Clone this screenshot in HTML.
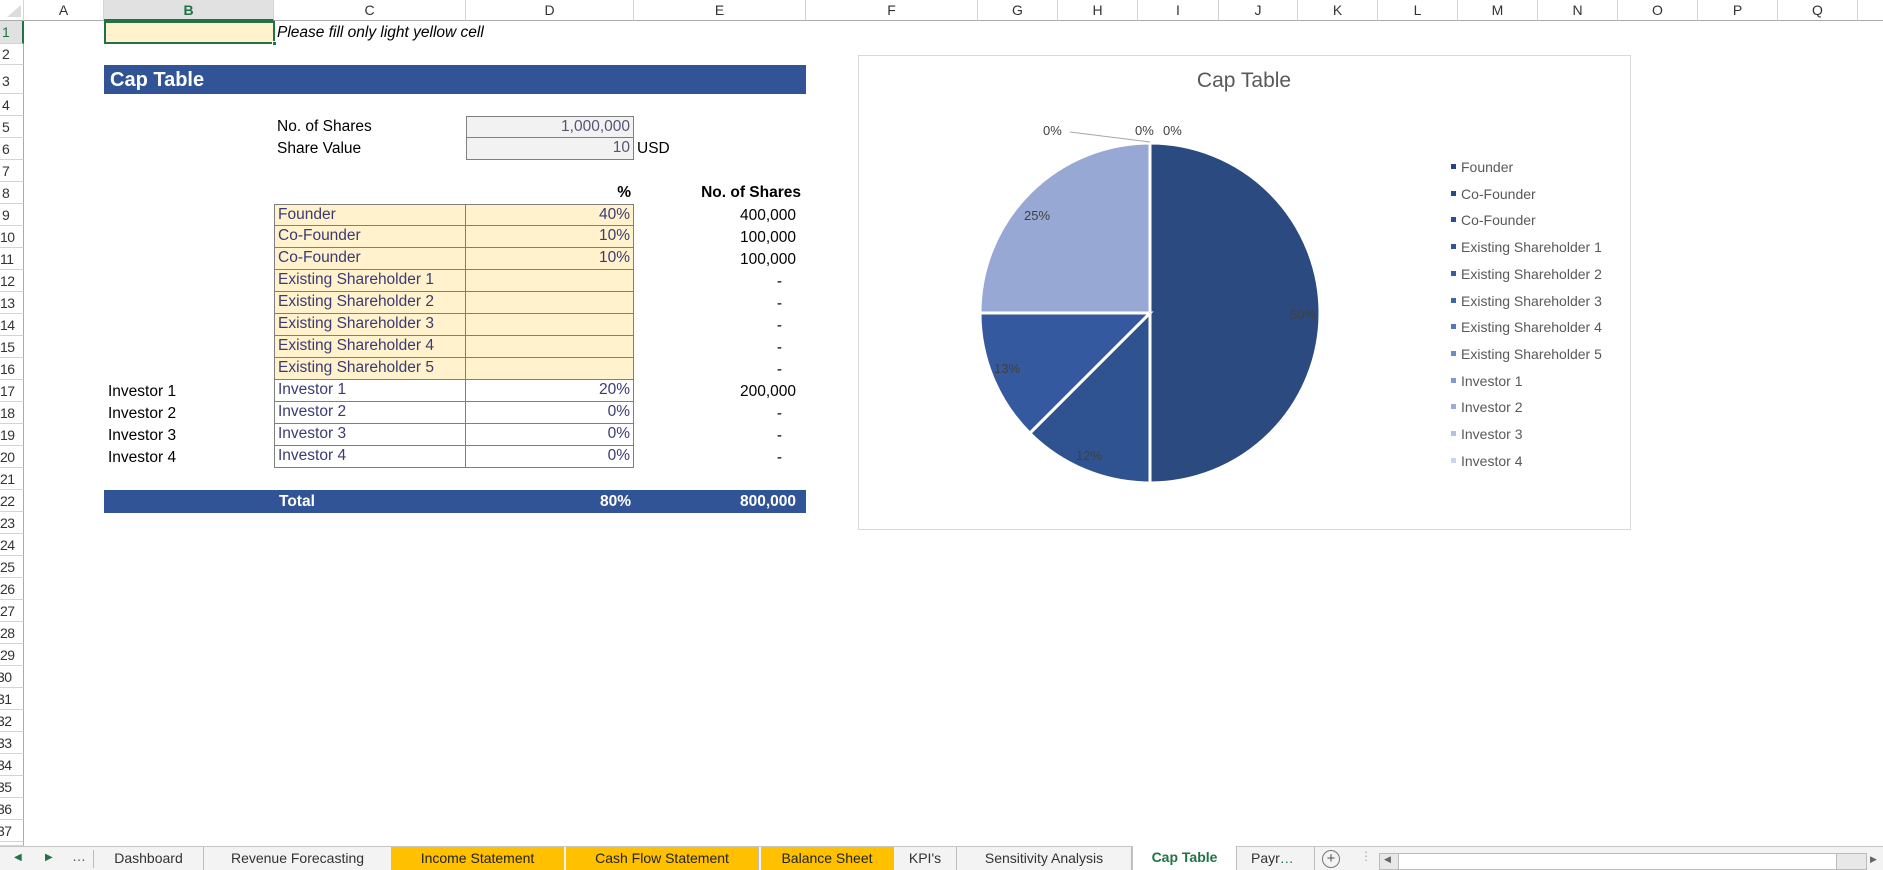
<!DOCTYPE html>
<html><head><meta charset="utf-8"><style>
*{margin:0;padding:0;box-sizing:border-box}
body{width:1883px;height:870px;overflow:hidden;background:#fff;font-family:"Liberation Sans",Arial,sans-serif;position:relative}
.a{position:absolute;white-space:nowrap}
.ch{position:absolute;top:0;height:21px;border-right:1px solid #d4d4d4;border-bottom:1px solid #ababab;text-align:center;font-size:14px;line-height:21px;color:#333}
.rh{position:absolute;left:0;width:24px;border-bottom:1px solid #d4d4d4;border-right:1px solid #ababab;font-size:14px;color:#333;text-align:left;padding-left:2px;overflow:hidden}
.t{font-size:15.5px;line-height:22px}
.cell{position:absolute;height:22px;border:1px solid #7f7f7f;font-size:15.5px;line-height:20px;color:#3b3b73;padding:0 3px}
.tab{position:absolute;top:847px;height:23px;font-size:14px;line-height:22px;color:#333;text-align:center;border-right:1px solid #bcbcbc}
</style></head><body>
<div class="ch" style="left:0;width:24px;background:#fff"></div>
<svg class="a" style="left:4px;top:4px" width="18" height="14"><polygon points="17,1 17,13 3,13" fill="#dcdcdc"/></svg>
<div class="ch" style="left:24px;width:80px">A</div>
<div class="ch" style="left:104px;width:170px;background:#e1e1e1;color:#217346;font-weight:bold;border-bottom:2px solid #217346">B</div>
<div class="ch" style="left:274px;width:192px">C</div>
<div class="ch" style="left:466px;width:168px">D</div>
<div class="ch" style="left:634px;width:172px">E</div>
<div class="ch" style="left:806px;width:172px">F</div>
<div class="ch" style="left:978px;width:80px">G</div>
<div class="ch" style="left:1058px;width:80px">H</div>
<div class="ch" style="left:1138px;width:81px">I</div>
<div class="ch" style="left:1219px;width:79px">J</div>
<div class="ch" style="left:1298px;width:80px">K</div>
<div class="ch" style="left:1378px;width:80px">L</div>
<div class="ch" style="left:1458px;width:80px">M</div>
<div class="ch" style="left:1538px;width:80px">N</div>
<div class="ch" style="left:1618px;width:80px">O</div>
<div class="ch" style="left:1698px;width:80px">P</div>
<div class="ch" style="left:1778px;width:80px">Q</div>
<div class="ch" style="left:1858px;width:25px;border-right:none"></div>
<div class="rh" style="top:21px;height:23px;line-height:23px;background:#e1e1e1;color:#217346;border-right:2px solid #217346">1</div>
<div class="rh" style="top:44px;height:21px;line-height:21px">2</div>
<div class="rh" style="top:65px;height:29px;line-height:32px">3</div>
<div id="rows"></div>
<script>
var h='';var y=94;for(var r=4;r<=37;r++){h+='<div class="rh" style="top:'+y+'px;height:22px;line-height:22px;'+(r>=10?'padding-left:0;text-indent:'+(r>=30?-3:0)+'px;letter-spacing:-0.5px':'')+'">'+r+'</div>';y+=22;}
h+='<div class="rh" style="top:'+y+'px;height:'+(846-y)+'px"></div>';
document.getElementById('rows').outerHTML=h;
</script>
<div class="a" style="left:104px;top:21px;width:171px;height:23px;background:#fff2cc;border:2px solid #217346"></div>
<div class="a" style="left:272px;top:41px;width:5px;height:5px;background:#217346;border:1px solid #fff"></div>
<div class="a t" style="left:277px;top:22px;font-style:italic;color:#000">Please fill only light yellow cell</div>
<div class="a" style="left:104px;top:65px;width:702px;height:29px;background:#305496;color:#fff;font-weight:bold;font-size:20px;line-height:30px;padding-left:6px">Cap Table</div>
<div class="a t" style="left:277px;top:116px">No. of Shares</div>
<div class="a t" style="left:277px;top:138px">Share Value</div>
<div class="cell" style="left:466px;top:116px;width:168px;background:#f2f2f2;text-align:right;color:#555577">1,000,000</div>
<div class="cell" style="left:466px;top:138px;width:168px;background:#f2f2f2;text-align:right;color:#555577;border-top:none;height:22px">10</div>
<div class="a t" style="left:637px;top:138px">USD</div>
<div class="a t" style="left:466px;top:182px;width:165px;text-align:right;font-weight:bold">%</div>
<div class="a t" style="left:634px;top:182px;width:167px;text-align:right;font-weight:bold">No. of Shares</div>
<div id="tbl"></div>
<script>
var rows=[["Founder","40%","400,000",1],["Co-Founder","10%","100,000",1],["Co-Founder","10%","100,000",1],["Existing Shareholder 1","","-",1],["Existing Shareholder 2","","-",1],["Existing Shareholder 3","","-",1],["Existing Shareholder 4","","-",1],["Existing Shareholder 5","","-",1],["Investor 1","20%","200,000",0],["Investor 2","0%","-",0],["Investor 3","0%","-",0],["Investor 4","0%","-",0]];
var s='';rows.forEach(function(r,i){var y=204+i*22;var bg=r[3]?'#fff2cc':'#fff';var bt=i?'border-top:none;height:22px;':'';
s+='<div class="cell" style="left:274px;top:'+y+'px;width:192px;background:'+bg+';'+bt+'">'+r[0]+'</div>';
s+='<div class="cell" style="left:465px;top:'+y+'px;width:169px;background:'+bg+';text-align:right;'+bt+'">'+r[1]+'</div>';
s+='<div class="a t" style="left:634px;top:'+(y+1)+'px;width:'+(r[2]=='-'?148:162)+'px;text-align:right">'+r[2]+'</div>';
if(i>=8)s+='<div class="a t" style="left:108px;top:'+(y+1)+'px">'+r[0]+'</div>';});
document.getElementById('tbl').outerHTML=s;
</script>
<div class="a" style="left:104px;top:490px;width:702px;height:23px;background:#305496;color:#fff;font-weight:bold;font-size:15.5px;line-height:23px">
<span class="a" style="left:175px">Total</span><span class="a" style="left:362px;width:165px;text-align:right">80%</span><span class="a" style="left:530px;width:162px;text-align:right">800,000</span></div>
<div class="a" style="left:858px;top:55px;width:773px;height:475px;border:1px solid #d9d9d9;background:#fff"></div>
<div class="a" style="left:1144px;top:69px;width:200px;text-align:center;font-size:21px;color:#595959">Cap Table</div>
<svg class="a" style="left:858px;top:55px" width="773" height="475">
<g transform="translate(292,258)" stroke="#fff" stroke-width="3">
<path d="M0,0 L0,-170 A170,170 0 0 1 0,170 Z" fill="#2b4a80"/>
<path d="M0,0 L0,170 A170,170 0 0 1 -120.2,120.2 Z" fill="#2f5391"/>
<path d="M0,0 L-120.2,120.2 A170,170 0 0 1 -170,0 Z" fill="#35599f"/>
<path d="M0,0 L-170,0 A170,170 0 0 1 0,-170 Z" fill="#97a8d5"/>
</g>
<polyline points="212,77 292,87" stroke="#a6a6a6" fill="none" stroke-width="1"/>
<g font-family="Liberation Sans,Arial,sans-serif" font-size="13" fill="#404040">
<text x="185" y="80">0%</text><text x="277" y="80">0%</text><text x="305" y="80">0%</text>
<text x="166" y="165">25%</text><text x="432" y="264">50%</text><text x="136" y="318">13%</text><text x="218" y="405">12%</text>
</g>
</svg>
<div id="leg"></div>
<script>
var L=["Founder","Co-Founder","Co-Founder","Existing Shareholder 1","Existing Shareholder 2","Existing Shareholder 3","Existing Shareholder 4","Existing Shareholder 5","Investor 1","Investor 2","Investor 3","Investor 4"];
var C=["#26457d","#2a4a86","#2e4f8f","#325598","#385ca2","#4065ab","#5677bb","#6f8bc6","#8398cc","#9aabd6","#b4c1e1","#cbd4ec"];
var s='';L.forEach(function(t,i){var y=158+i*26.7;s+='<div class="a" style="left:1451px;top:'+(y+6)+'px;width:5px;height:5px;background:'+C[i]+'"></div><div class="a" style="left:1461px;top:'+y+'px;font-size:14px;line-height:18px;color:#595959">'+t+'</div>';});
document.getElementById('leg').outerHTML=s;
</script>
<div class="a" style="left:0;top:846px;width:1883px;height:24px;background:#f3f3f3;border-top:1px solid #c6c6c6"></div>
<div class="a" style="left:14px;top:852px;font-size:10px;color:#217346">◀</div>
<div class="a" style="left:45px;top:852px;font-size:10px;color:#217346">▶</div>
<div class="a" style="left:72px;top:848px;font-size:14px;color:#555">…</div>
<div class="a" style="left:93px;top:850px;height:18px;border-left:1px solid #bcbcbc"></div>
<div class="tab" style="left:94px;width:110px">Dashboard</div>
<div class="tab" style="left:204px;width:188px">Revenue Forecasting</div>
<div class="tab" style="left:392px;width:172px;background:#ffc000;color:#222">Income Statement</div>
<div class="tab" style="left:566px;width:193px;background:#ffc000;color:#222">Cash Flow Statement</div>
<div class="tab" style="left:761px;width:133px;background:#ffc000;color:#222">Balance Sheet</div>
<div class="tab" style="left:894px;width:63px">KPI's</div>
<div class="tab" style="left:957px;width:175px">Sensitivity Analysis</div>
<div class="tab" style="left:1132px;width:105px;background:#fff;color:#217346;font-weight:bold;top:846px;height:24px;border-left:1px solid #c6c6c6">Cap Table</div>
<div class="tab" style="left:1237px;width:78px;text-align:left;padding-left:14px">Payr<span style="color:#217346">…</span></div>
<div class="a" style="left:1322px;top:850px;width:18px;height:18px;border:1px solid #777;border-radius:50%;text-align:center;font-size:15px;line-height:16px;color:#555">+</div>
<div class="a" style="left:1360px;top:849px;font-size:12px;color:#aaa">⋮</div>
<div class="a" style="left:1379px;top:853px;width:488px;height:17px;background:#e8e8e8;border:1px solid #bbb"></div>
<div class="a" style="left:1398px;top:853px;width:439px;height:17px;background:#fff;border:1px solid #bbb"></div>
<div class="a" style="left:1384px;top:854px;font-size:9px;color:#666">◀</div>
<div class="a" style="left:1870px;top:854px;font-size:9px;color:#666">▶</div>
</body></html>
